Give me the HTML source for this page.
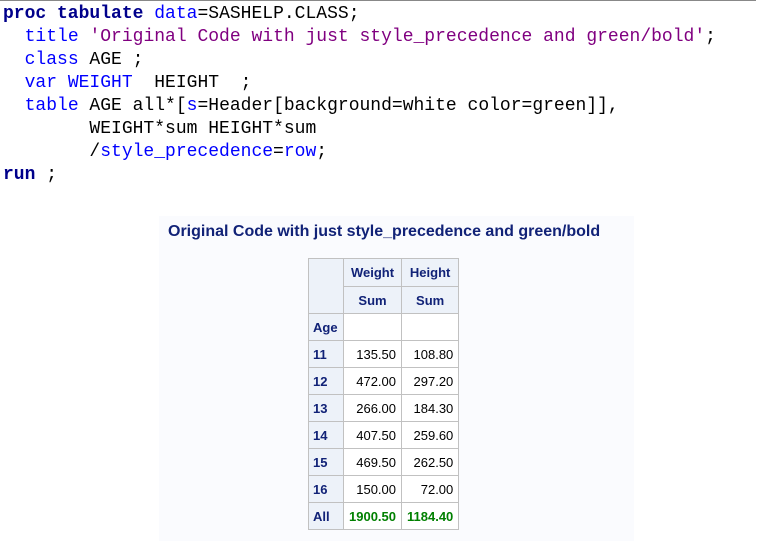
<!DOCTYPE html>
<html><head><style>
body{margin:0;width:760px;height:541px;background:#fff;position:relative;overflow:hidden}
.topline{position:absolute;left:0;top:0;width:756px;height:1px;background:#888}
pre{position:absolute;left:3px;top:3px;margin:0;font-family:"Liberation Mono",monospace;font-size:18px;line-height:23px;color:#000}
.k{color:#00008b;font-weight:bold}.b{color:#0000ff}.s{color:#800080}
.panel{position:absolute;left:159px;top:216px;width:475px;height:325px;background:#fafbfe}
.title{position:absolute;left:9px;top:7px;font-family:"Liberation Sans",sans-serif;font-weight:bold;font-size:16px;color:#112277;white-space:nowrap}
table{position:absolute;left:149px;top:42px;border-collapse:collapse;font-family:"Liberation Sans",sans-serif;font-size:13px}
td{border:1px solid #c1c1c1;height:26px;padding:0 5px;background:#fff;color:#000;text-align:right}
td.h{background:#edf2f9;color:#112277;font-weight:bold;text-align:center}
td.r{background:#edf2f9;color:#112277;font-weight:bold;text-align:left;padding-left:4px}
td.g{color:#008000;font-weight:bold}
</style></head><body>
<div class="topline"></div>
<pre><span class="k">proc tabulate</span> <span class="b">data</span>=SASHELP.CLASS;
  <span class="b">title</span> <span class="s">'Original Code with just style_precedence and green/bold'</span>;
  <span class="b">class</span> AGE ;
  <span class="b">var</span> <span class="b">WEIGHT</span>  HEIGHT  ;
  <span class="b">table</span> AGE all*[<span class="b">s</span>=Header[background=white color=green]],
        WEIGHT*sum HEIGHT*sum
        /<span class="b">style_precedence</span>=<span class="b">row</span>;
<span class="k">run</span> ;</pre>
<div class="panel">
<div class="title">Original Code with just style_precedence and green/bold</div>
<table>
<tr><td class="h" rowspan="2" style="width:24px"></td><td class="h" style="width:46px;height:27px">Weight</td><td class="h" style="width:46px">Height</td></tr>
<tr><td class="h">Sum</td><td class="h">Sum</td></tr>
<tr><td class="r">Age</td><td></td><td></td></tr>
<tr><td class="r">11</td><td>135.50</td><td>108.80</td></tr>
<tr><td class="r">12</td><td>472.00</td><td>297.20</td></tr>
<tr><td class="r">13</td><td>266.00</td><td>184.30</td></tr>
<tr><td class="r">14</td><td>407.50</td><td>259.60</td></tr>
<tr><td class="r">15</td><td>469.50</td><td>262.50</td></tr>
<tr><td class="r">16</td><td>150.00</td><td>72.00</td></tr>
<tr><td class="r">All</td><td class="g">1900.50</td><td class="g">1184.40</td></tr>
</table>
</div>
</body></html>
